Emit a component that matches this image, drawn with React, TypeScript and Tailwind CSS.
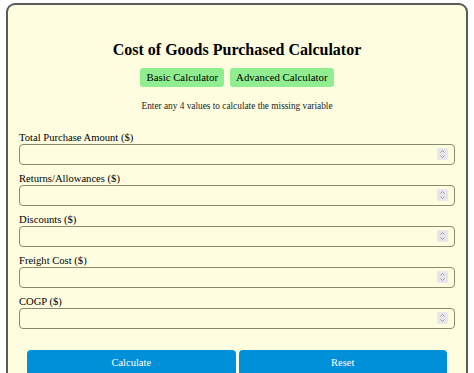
import React from "react"

const fields = [
    "Total Purchase Amount ($)",
    "Returns/Allowances ($)",
    "Discounts ($)",
    "Freight Cost ($)",
    "COGP ($)",
]

function Spinner() {
    return (
        <span className="pointer-events-none absolute right-[7px] top-[4px] flex h-[12px] w-[11px] items-center justify-center rounded-[2px] bg-[#e6e6ec]">
            <svg width="7" height="10" viewBox="0 0 7 10" fill="none" stroke="#9a9aa4" strokeWidth="1">
                <path d="M1.5 3.5 L3.5 1.5 L5.5 3.5" />
                <path d="M1.5 6.5 L3.5 8.5 L5.5 6.5" />
            </svg>
        </span>
    )
}

export default function App() {
    return (
        <div className="min-h-screen bg-white px-[6px] pt-[3px] font-['Liberation_Serif',serif] text-black">
            <div className="h-[400px] rounded-[9px] border-2 border-[#5a5a5a] bg-[#fffde0] px-[11px] pt-[35px]">
                {/* Header */}
                <h1 className="text-center text-[16px] font-bold leading-[20px]">
                    Cost of Goods Purchased Calculator
                </h1>
                <div className="mt-[8px] flex justify-center gap-[6px]">
                    <button className="h-[19px] rounded-[3px] bg-[#90ee90] px-[6px] font-['Liberation_Serif',serif] text-[10.8px] leading-[19px]">
                        Basic Calculator
                    </button>
                    <button className="h-[19px] rounded-[3px] bg-[#90ee90] px-[6px] font-['Liberation_Serif',serif] text-[10.8px] leading-[19px]">
                        Advanced Calculator
                    </button>
                </div>
                <p className="mt-[13px] text-center text-[9.3px] leading-[13px] text-[#222]">
                    Enter any 4 values to calculate the missing variable
                </p>

                {/* Fields */}
                <div className="mt-[18px] flex flex-col gap-[7px]">
                    {fields.map((f) => (
                        <label key={f} className="flex flex-col">
                            <span className="font-['Liberation_Serif',serif] text-[10.6px] leading-[13px]">{f}</span>
                            <div className="relative">
                                <input
                                    type="number"
                                    className="block h-[21px] w-full rounded-[4px] border border-[#8a8a70] bg-transparent px-1 text-[11px] outline-none [appearance:textfield] [&::-webkit-inner-spin-button]:appearance-none"
                                />
                                <Spinner />
                            </div>
                        </label>
                    ))}
                </div>

                {/* Actions */}
                <div className="mt-[21px] flex gap-[3px] px-[8px]">
                    <button className="h-[26px] flex-1 rounded-[4px] bg-[#0090da] font-['Liberation_Serif',serif] text-[10.5px] text-white">
                        Calculate
                    </button>
                    <button className="h-[26px] flex-1 rounded-[4px] bg-[#0090da] font-['Liberation_Serif',serif] text-[10.5px] text-white">
                        Reset
                    </button>
                </div>
            </div>
        </div>
    )
}
